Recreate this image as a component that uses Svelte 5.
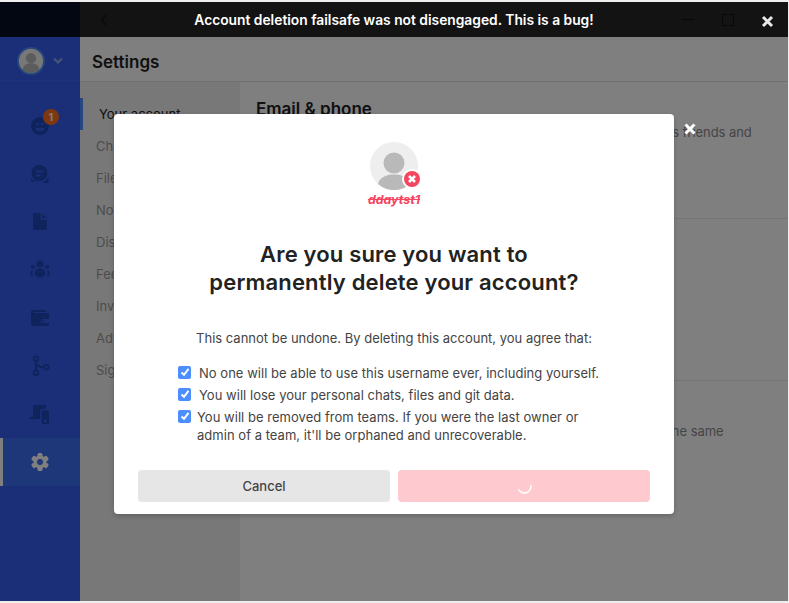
<script>
	const tabs = [
		{ name: 'people' },
		{ name: 'chat' },
		{ name: 'files' },
		{ name: 'teams' },
		{ name: 'wallet' },
		{ name: 'git' },
		{ name: 'devices' },
		{ name: 'settings', active: true }
	];
	const navItems = ['Your account', 'Chat', 'Files', 'Notifications', 'Display', 'Feedback', 'Invitations', 'Advanced', 'Sign out'];
	const terms = [
		'No one will be able to use this username ever, including yourself.',
		'You will lose your personal chats, files and git data.',
		"You will be removed from teams. If you were the last owner or admin of a team, it'll be orphaned and unrecoverable."
	];
</script>

<div class="frame">
	<div class="window">
		<aside class="sidebar">
			<div class="titlespace"></div>
			<div class="me">
				<svg width="28" height="28" viewBox="0 0 30 30">
					<circle cx="15" cy="15" r="14" fill="#f0f0f0" stroke="#4c8eff" stroke-width="2" />
					<circle cx="15" cy="12" r="5.5" fill="#b8b8b8" />
					<path d="M6 24c1-5 5-6.5 9-6.5s8 1.5 9 6.5a12.5 12.5 0 0 1-18 0z" fill="#b8b8b8" />
				</svg>
				<svg width="12" height="8" viewBox="0 0 12 8"><path d="M2 1.5l4 4 4-4" fill="none" stroke="#8ba8f0" stroke-width="2.2" /></svg>
			</div>
			<nav class="tabs">
				{#each tabs as tab}
					<div class="tab" class:active={tab.active}>
						<svg width="24" height="24" viewBox="0 0 24 24" fill="#1e46b8">
							{#if tab.name === 'people'}
								<circle cx="12" cy="12" r="9" />
								<circle cx="9.5" cy="10" r="1.3" fill="#345ef0" />
								<circle cx="14.5" cy="10" r="1.3" fill="#345ef0" />
								<path d="M7 14h10c-.5 2-2.8 3.2-5 3.2S7.5 16 7 14z" fill="#345ef0" />
							{:else if tab.name === 'chat'}
								<circle cx="11.5" cy="11" r="8" />
								<path d="M3 16.5c1 1.5 3.5 2.7 6 3l-1 .5H3zM20.5 14.5V21l-7-.5c3.5-.8 6-3 7-6z" />
								<rect x="8" y="8.5" width="7" height="2" fill="#345ef0" />
								<rect x="8" y="12.5" width="4.5" height="2" fill="#345ef0" />
							{:else if tab.name === 'files'}
								<path d="M6 3h6.5v6.5H19V19a1 1 0 0 1-1 1H6a1 1 0 0 1-1-1V4a1 1 0 0 1 1-1zM14 3.5l5 4.5h-5z" />
							{:else if tab.name === 'teams'}
								<circle cx="12" cy="6" r="3.5" />
								<ellipse cx="12" cy="15" rx="5.5" ry="4.5" />
								<circle cx="5" cy="9" r="2" />
								<circle cx="19" cy="9" r="2" />
								<path d="M3 18c-1-2-1-4 1-6l1 1c-1 1-1 3 0 5zM21 18c1-2 1-4-1-6l-1 1c1 1 1 3 0 5z" />
							{:else if tab.name === 'wallet'}
								<path d="M5 4h13v2H5.5v1H21v6h-6a2 2 0 0 0 0 4h6v3H5a2 2 0 0 1-2-2V6a2 2 0 0 1 2-2z" />
								<circle cx="15" cy="15" r="1" />
							{:else if tab.name === 'git'}
								<path d="M8 7v9.5M8 9c.5 3 4 4.3 8 4.3" fill="none" stroke="#1e46b8" stroke-width="1.8" />
								<circle cx="8" cy="4.7" r="2.3" fill="none" stroke="#1e46b8" stroke-width="1.8" />
								<circle cx="8" cy="18.7" r="2.3" fill="none" stroke="#1e46b8" stroke-width="1.8" />
								<circle cx="18.3" cy="13.3" r="2.3" fill="none" stroke="#1e46b8" stroke-width="1.8" />
							{:else if tab.name === 'devices'}
								<path d="M7 3h11v4h-4a2 2 0 0 0-2 2v8H1.5v-2H5V5a2 2 0 0 1 2-2z" />
								<path d="M14.5 8.5H20a1 1 0 0 1 1 1V21a1 1 0 0 1-1 1h-5.5a1 1 0 0 1-1-1V9.5a1 1 0 0 1 1-1zM17.2 17.5a1.5 1.5 0 1 0 0 3 1.5 1.5 0 0 0 0-3z" fill-rule="evenodd" />
							{:else}
								{#each [0, 60, 120] as angle}
									<rect x="9.5" y="3" width="5" height="18" rx="1.5" fill="#fff" transform="rotate({angle} 12 12)" />
								{/each}
								<circle cx="12" cy="12" r="6.5" fill="#fff" />
								<circle cx="12" cy="12" r="3" fill="#3d6ef0" />
							{/if}
						</svg>
						{#if tab.name === 'people'}<span class="badge">1</span>{/if}
					</div>
				{/each}
			</nav>
		</aside>

		<div class="main">
			<div class="titlebar">
				<svg width="8" height="12" viewBox="0 0 8 12"><path d="M6.5 1L1.5 6l5 5" fill="none" stroke="#999" stroke-width="2" /></svg>
				<span class="win-min"></span>
				<span class="win-max"></span>
			</div>
			<header class="header">Settings</header>
			<div class="body">
				<div class="settings-nav">
					{#each navItems as item, i}
						<div class="nav-item" class:selected={i === 0}>{item}</div>
					{/each}
				</div>
				<div class="content">
					<section class="block one">
						<h2>Email &amp; phone</h2>
						<p>Allowing Keybase to connect with your email or phone number allows friends and</p>
					</section>
					<section class="block two"></section>
					<section class="block three">
						<p>Your password also allows you to sign out and then sign back in on the same</p>
					</section>
				</div>
			</div>
		</div>

		<div class="overlay">
			<div class="modal">
				<button class="modal-close" aria-label="Close">
					<svg width="12" height="12" viewBox="0 0 12 12"><path d="M1.5 1.5l9 9m0-9l-9 9" stroke="#fff" stroke-width="3" /></svg>
				</button>
				<div class="avatar">
					<svg width="48" height="48" viewBox="0 0 48 48">
						<circle cx="24" cy="24" r="24" fill="#eeeeee" />
						<circle cx="24" cy="21" r="10.5" fill="#b9b9b9" />
						<path d="M8 42c2-7 8-9.5 16-9.5S38 35 40 42a24 24 0 0 1-32 0z" fill="#b9b9b9" />
					</svg>
					<svg class="avatar-x" width="20" height="20" viewBox="0 0 20 20">
						<circle cx="10" cy="10" r="10" fill="#fff" />
						<circle cx="10" cy="10" r="8" fill="#f5455f" />
						<path d="M7 7l6 6m0-6l-6 6" stroke="#fff" stroke-width="2.6" />
					</svg>
				</div>
				<div class="username">ddaytst1</div>
				<h1>Are you sure you want to<br />permanently delete your account?</h1>
				<p class="lede">This cannot be undone. By deleting this account, you agree that:</p>
				<ul class="terms">
					{#each terms as term}
						<li>
							<span class="check">
								<svg width="10" height="10" viewBox="0 0 10 10"><path d="M1.5 5.5l2.5 2.3 4.5-6" fill="none" stroke="#fff" stroke-width="2" /></svg>
							</span>
							<span>{term}</span>
						</li>
					{/each}
				</ul>
				<div class="actions">
					<button class="btn cancel">Cancel</button>
					<button class="btn danger" aria-label="Deleting">
						<svg width="16" height="16" viewBox="0 0 16 16"><path d="M2.5 11.3A6.5 6.5 0 0 0 14.7 7" fill="none" stroke="#fff" stroke-width="1.5" /></svg>
					</button>
				</div>
			</div>
		</div>

		<div class="banner">
			<span>Account deletion failsafe was not disengaged. This is a bug!</span>
			<svg class="banner-close" width="13" height="13" viewBox="0 0 13 13"><path d="M2 2l9 9m0-9l-9 9" stroke="#e8e8e8" stroke-width="3" /></svg>
		</div>
	</div>
</div>

<style>
	:global(body) {
		margin: 0;
		background: #eeeeee;
	}

	.frame {
		width: 789px;
		height: 603px;
		padding: 2px 1px 2px 0;
		box-sizing: border-box;
		font-family: Inter, 'Noto Sans', sans-serif;
		color: #222;
	}

	.window {
		position: relative;
		display: flex;
		height: 100%;
		overflow: hidden;
		background: #fff;
	}

	.sidebar {
		width: 80px;
		flex: none;
		background: #345ef0;
	}

	.titlespace {
		height: 35px;
	}

	.me {
		height: 44px;
		box-sizing: border-box;
		padding: 4px 0 0 1px;
		display: flex;
		align-items: center;
		justify-content: center;
		gap: 7px;
		border-bottom: 1px solid #3a66f5;
	}

	.tabs {
		padding-top: 21px;
	}

	.tab {
		position: relative;
		height: 48px;
		display: flex;
		align-items: center;
		justify-content: center;
		box-sizing: border-box;
	}

	.tab.active {
		background: #3d6ef0;
		border-left: 3px solid #fff;
		padding-right: 3px;
	}

	.badge {
		position: absolute;
		left: 43px;
		top: 7px;
		width: 16px;
		height: 16px;
		border-radius: 50%;
		background: #ff6f21;
		color: #fff;
		font-size: 10px;
		font-weight: 700;
		line-height: 16px;
		text-align: center;
	}

	.main {
		flex: 1;
		min-width: 0;
		display: flex;
		flex-direction: column;
	}

	.titlebar {
		height: 35px;
		flex: none;
		box-sizing: border-box;
		display: flex;
		align-items: center;
		gap: 28px;
		padding: 0 54px 0 20px;
	}

	.win-min {
		margin-left: auto;
		width: 12px;
		height: 1px;
		background: #777;
	}

	.win-max {
		width: 10px;
		height: 10px;
		border: 1px solid #777;
	}

	.header {
		height: 45px;
		flex: none;
		box-sizing: border-box;
		display: flex;
		align-items: center;
		padding: 5px 0 0 12px;
		font-size: 17px;
		font-weight: 600;
		border-bottom: 1px solid #e0e0e0;
	}

	.body {
		flex: 1;
		display: flex;
		min-height: 0;
	}

	.settings-nav {
		width: 160px;
		flex: none;
		background: #f0f0f0;
		padding-top: 16px;
		box-sizing: border-box;
		font-size: 13px;
		color: #999;
	}

	.nav-item {
		height: 32px;
		line-height: 32px;
		padding-left: 16px;
	}

	.nav-item.selected {
		border-left: 3px solid #4c8eff;
		color: #222;
		box-sizing: border-box;
	}

	.content {
		flex: 1;
		min-width: 0;
		font-size: 13px;
		color: #8a8a8a;
	}

	.block {
		padding: 17px 16px 0;
		box-sizing: border-box;
		border-bottom: 1px solid #e8e8e8;
	}

	.block.one {
		height: 137px;
	}

	.block.two {
		height: 162px;
	}

	.block.three {
		border-bottom: 0;
		padding-top: 42px;
	}

	.block h2 {
		margin: 0 0 5px;
		font-size: 17px;
		font-weight: 600;
		color: #222;
	}

	.block p {
		margin: 0;
		white-space: nowrap;
		letter-spacing: -0.05px;
	}

	.overlay {
		position: absolute;
		inset: 0;
		display: flex;
		align-items: center;
		justify-content: center;
		padding-top: 24px;
		background: rgba(0, 0, 0, 0.5);
	}

	.modal {
		position: relative;
		width: 560px;
		height: 400px;
		box-sizing: border-box;
		padding: 28px 24px 0;
		display: flex;
		flex-direction: column;
		align-items: center;
		background: #fff;
		border-radius: 4px;
		box-shadow: 0 2px 5px rgba(0, 0, 0, 0.2);
	}

	.modal-close {
		position: absolute;
		top: 9px;
		right: -22px;
		padding: 0;
		border: 0;
		background: none;
		display: flex;
	}

	.avatar {
		position: relative;
		height: 48px;
		width: 48px;
	}

	.avatar-x {
		position: absolute;
		right: -4px;
		bottom: 1px;
	}

	.username {
		margin-top: 2px;
		font-size: 12.4px;
		font-style: italic;
		font-weight: 700;
		line-height: 16px;
		color: #f5455f;
		text-decoration: line-through;
	}

	h1 {
		margin: 32px 0 0;
		font-size: 22px;
		font-weight: 600;
		line-height: 28px;
		letter-spacing: 0.17px;
		text-align: center;
		color: #222;
	}

	.lede {
		margin: 33px 0 0;
		font-size: 13px;
		line-height: 18px;
		color: #444;
	}

	.terms {
		align-self: center;
		width: 432px;
		margin: 17px 0 0;
		padding: 0;
		list-style: none;
		font-size: 13px;
		line-height: 18px;
		letter-spacing: 0.03px;
		color: #444;
	}

	.terms li {
		display: flex;
		gap: 8px;
		margin-bottom: 4px;
	}

	.terms li:last-child {
		gap: 6px;
	}

	.check {
		flex: none;
		width: 13px;
		height: 13px;
		margin-top: 2px;
		border-radius: 2px;
		background: #4c8eff;
		display: flex;
		align-items: center;
		justify-content: center;
	}

	.actions {
		align-self: stretch;
		display: flex;
		gap: 8px;
		margin-top: auto;
		margin-bottom: 12px;
	}

	.btn {
		flex: 1;
		height: 32px;
		border: 0;
		border-radius: 4px;
		font-family: inherit;
		font-size: 13px;
		font-weight: 500;
		display: flex;
		align-items: center;
		justify-content: center;
		padding: 0;
	}

	.cancel {
		background: #e6e6e6;
		color: #444;
	}

	.danger {
		background: #ffc9d0;
	}

	.banner {
		position: absolute;
		top: 0;
		left: 0;
		right: 0;
		height: 35px;
		display: flex;
		align-items: center;
		justify-content: center;
		background: rgba(0, 0, 0, 0.85);
		color: #fff;
		font-size: 13.8px;
		font-weight: 600;
	}

	.banner-close {
		position: absolute;
		right: 14px;
		top: 13px;
	}
</style>
